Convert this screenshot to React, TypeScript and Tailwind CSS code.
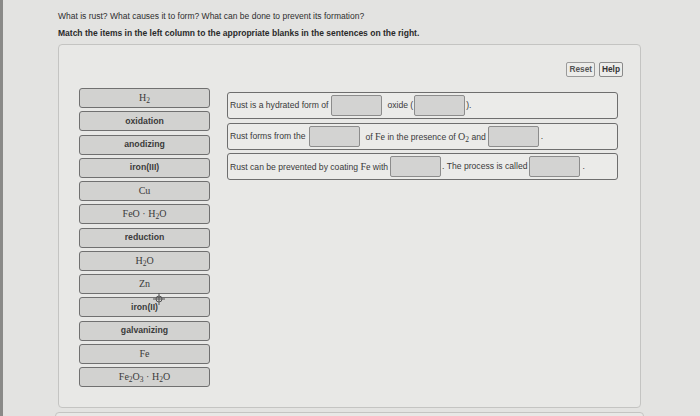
import React from "react";

const sans = { fontFamily: '"Liberation Sans", Arial, sans-serif' };
const serif = { fontFamily: '"Liberation Serif", "Times New Roman", serif' };

function Sub({ children }: { children: React.ReactNode }) {
  return <span className="text-[7.5px] leading-none relative top-[2px]">{children}</span>;
}

type Item = { label: React.ReactNode; chem?: boolean };

const items: Item[] = [
  { label: <>H<Sub>2</Sub></>, chem: true },
  { label: "oxidation" },
  { label: "anodizing" },
  { label: "iron(III)" },
  { label: "Cu", chem: true },
  { label: <>FeO · H<Sub>2</Sub>O</>, chem: true },
  { label: "reduction" },
  { label: <>H<Sub>2</Sub>O</>, chem: true },
  { label: "Zn", chem: true },
  { label: "iron(II)" },
  { label: "galvanizing" },
  { label: "Fe", chem: true },
  { label: <>Fe<Sub>2</Sub>O<Sub>3</Sub> · H<Sub>2</Sub>O</>, chem: true },
];

function Blank() {
  return <span className="inline-block align-middle w-[51px] h-[21px] bg-[#d3d3d2] border border-[#8c8c8c] rounded-[2px] shrink-0" />;
}

function Sentence({ children }: { children: React.ReactNode }) {
  return (
    <div className="h-[27px] flex items-center px-[2px] border-[1.5px] border-[#6e6e6e] rounded-[3px] bg-[#ebebe9] text-[8.6px] text-[#3a3a3a] whitespace-nowrap" style={sans}>
      {children}
    </div>
  );
}

export default function App() {
  return (
    <div className="w-[700px] h-[416px] overflow-hidden bg-[#e3e3e1] border-l-[3px] border-[#8a8a88] relative" style={sans}>
      <div className="pl-[55px] pt-[11px]">
        <div className="text-[8.5px] leading-[10px] text-[#2e2e2e]">What is rust? What causes it to form? What can be done to prevent its formation?</div>
        <div className="mt-[7px] text-[8.5px] leading-[10px] font-bold text-[#2a2a2a]">Match the items in the left column to the appropriate blanks in the sentences on the right.</div>
      </div>

      <div className="ml-[55px] mt-[6px] w-[583px] h-[364px] border border-[#c4c4c2] rounded-[4px] bg-[#e8e8e6]">
        <div className="flex justify-end gap-[4px] pr-[17px] pt-[17px]">
          <button className="h-[15px] px-[2px] text-[8.3px] font-bold text-[#555] bg-[#ececea] border border-[#9a9a9a] rounded-[2px] leading-none">Reset</button>
          <button className="h-[15px] px-[2px] text-[8.3px] font-bold text-[#333] bg-[#ececea] border border-[#8a8a8a] rounded-[2px] leading-none">Help</button>
        </div>
        <div className="flex mt-[11px] pl-[20px]">
          <div className="flex flex-col gap-[3.25px] w-[131px] relative">
            {items.map((it, i) => (
              <div
                key={i}
                className={`h-[20px] flex items-center justify-center border-[1.5px] border-[#707070] rounded-[3px] bg-[#d2d2d0] text-[#3a3a3a] ${it.chem ? "text-[10px]" : "text-[8.7px] font-bold"}`}
                style={it.chem ? serif : sans}
              >
                <span className="leading-none">{it.label}</span>
              </div>
            ))}
            <svg className="absolute left-[73px] top-[204px]" width="14" height="14" viewBox="0 0 14 14">
              <path d="M7 1v12M1 7h12" stroke="#555" strokeWidth="1" />
              <circle cx="7" cy="7" r="3" fill="none" stroke="#555" strokeWidth="1" />
            </svg>
          </div>
          <div className="ml-[17px] mt-[4px] w-[391px] flex flex-col gap-[3.5px]">
            <Sentence>
              <span>Rust is a hydrated form of</span>
              <span className="ml-[3px] flex"><Blank /></span>
              <span className="ml-[5px]">oxide (</span>
              <span className="ml-[1px] flex"><Blank /></span>
              <span className="ml-[1px]">).</span>
            </Sentence>
            <Sentence>
              <span>Rust forms from the</span>
              <span className="ml-[4px] flex"><Blank /></span>
              <span className="ml-[5px]">of <span className="text-[10px]" style={serif}>Fe</span> in the presence of <span className="text-[10px]" style={serif}>O<Sub>2</Sub></span> and</span>
              <span className="ml-[2px] flex"><Blank /></span>
              <span className="ml-[2px]">.</span>
            </Sentence>
            <Sentence>
              <span>Rust can be prevented by coating <span className="text-[10px]" style={serif}>Fe</span> with</span>
              <span className="ml-[2px] flex"><Blank /></span>
              <span className="ml-[1px]">. The process is called</span>
              <span className="ml-[2px] flex"><Blank /></span>
              <span className="ml-[2px]">.</span>
            </Sentence>
          </div>
        </div>
      </div>
      <div className="ml-[52px] mt-[4px] w-[589px] h-[20px] border border-[#c4c4c2] rounded-[4px] bg-[#e8e8e6]" />
    </div>
  );
}
